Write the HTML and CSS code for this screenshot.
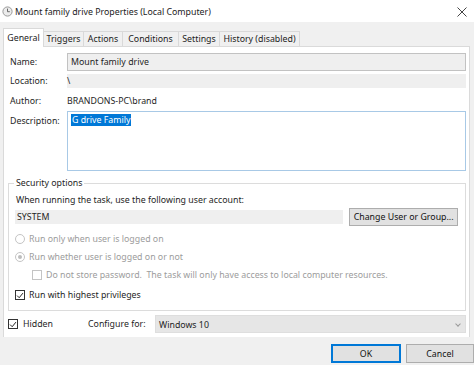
FILE: index.html
```html
<!DOCTYPE html>
<html lang="en">
<head>
    <meta charset="UTF-8">
    <title>Mount family drive Properties (Local Computer)</title>
    <link rel="stylesheet" href="styles.css">
</head>
<body>
  <div class="window">
    <div class="titlebar">
        <svg class="title-icon" width="11" height="11" viewBox="0 0 11 11">
            <circle cx="5.5" cy="5.5" r="4.6" fill="#ececec" stroke="#9a9a9a" stroke-width="1"/>
            <path d="M5.5 2.6 V5.7 H7.8" fill="none" stroke="#6a6a6a" stroke-width="1"/>
        </svg>
        <span class="title-text">Mount family drive Properties (Local Computer)</span>
        <svg class="close-x" width="10" height="10" viewBox="0 0 10 10">
            <path d="M0.5 0.5 L9.5 9.5 M9.5 0.5 L0.5 9.5" stroke="#444" stroke-width="1"/>
        </svg>
    </div>

    <div class="tabs">
        <span class="tab active t-general">General</span>
        <span class="tab t-triggers">Triggers</span>
        <span class="tab t-actions">Actions</span>
        <span class="tab t-conditions">Conditions</span>
        <span class="tab t-settings">Settings</span>
        <span class="tab t-history">History (disabled)</span>
    </div>

    <div class="panel">
        <div class="row name-row">
            <span class="lbl">Name:</span>
            <div class="field boxed">Mount family drive</div>
        </div>
        <div class="row">
            <span class="lbl">Location:</span>
            <div class="field flat">\</div>
        </div>
        <div class="row">
            <span class="lbl">Author:</span>
            <div class="field plain">BRANDONS-PC\brand</div>
        </div>
        <div class="desc-row">
            <span class="lbl">Description:</span>
            <div class="textarea"><span class="sel">G drive Family</span></div>
        </div>

        <div class="group">
            <span class="legend">Security options</span>
            <p class="line">When running the task, use the following user account:</p>
            <div class="account">
                <div class="account-name">SYSTEM</div>
                <button class="btn change">Change User or Group...</button>
            </div>
            <div class="opt first disabled"><span class="radio"></span>Run only when user is logged on</div>
            <div class="opt disabled"><span class="radio on"></span>Run whether user is logged on or not</div>
            <div class="opt sub disabled"><span class="check"></span>Do not store password.&nbsp; The task will only have access to local computer resources.</div>
            <div class="opt priv">
                <span class="check on">
                    <svg width="9" height="9" viewBox="0 0 9 9"><path d="M1.2 4.6 L3.6 7 L7.8 1.8" fill="none" stroke="#222" stroke-width="1.1"/></svg>
                </span>Run with highest privileges
            </div>
        </div>

        <div class="bottom-row">
            <span class="opt hidden-opt">
                <span class="check on">
                    <svg width="9" height="9" viewBox="0 0 9 9"><path d="M1.2 4.6 L3.6 7 L7.8 1.8" fill="none" stroke="#222" stroke-width="1.1"/></svg>
                </span>Hidden
            </span>
            <span class="cfg-lbl">Configure for:</span>
            <div class="select">Windows 10<span class="chev"></span></div>
        </div>
    </div>

    <div class="footer">
        <button class="btn ok">OK</button>
        <button class="btn cancel">Cancel</button>
    </div>
  </div>
</body>
</html>
```

FILE: styles.css
```css
* {
    box-sizing: border-box;
}
body {
    margin: 0;
    padding: 0;
    font-family: "Noto Sans", "Open Sans", sans-serif;
    font-size: 8.8px;
    color: #1e1e1e;
    background: #f0f0f0;
}
.window {
    width: 474px;
    height: 365px;
    overflow: hidden;
    background: #f0f0f0;
    display: flex;
    flex-direction: column;
}

/* title bar */
.titlebar {
    height: 22px;
    flex: none;
    background: #ffffff;
    display: flex;
    align-items: center;
    padding: 1px 0 0 1px;
}
.title-icon {
    margin: 0 2px 0 1px;
}
.title-text {
    flex: 1;
    color: #222;
}
.close-x {
    margin-right: 7px;
}

/* tabs */
.tabs {
    height: 24px;
    flex: none;
    display: flex;
    align-items: flex-end;
    padding-left: 3px;
}
.tab {
    height: 15px;
    line-height: 14px;
    text-align: center;
    border: 1px solid #d9d9d9;
    border-bottom: none;
    margin-right: -1px;
    color: #222;
    background: #f0f0f0;
}
.tab.active {
    background: #ffffff;
    height: 19px;
    line-height: 19px;
    margin-bottom: -1px;
    position: relative;
    z-index: 1;
}
.t-general { width: 41px; }
.t-triggers { width: 41px; }
.t-actions { width: 40px; }
.t-conditions { width: 57px; }
.t-settings { width: 42px; }
.t-history { width: 81px; }

/* main panel */
.panel {
    flex: none;
    height: 291px;
    background: #ffffff;
    margin: 0 4px 0 3px;
    border: 1px solid #dadada;
    border-bottom: none;
    padding: 6px 3px 0 6px;
}
.row {
    display: flex;
    align-items: center;
    height: 20px;
}
.name-row {
    height: 18px;
}
.lbl {
    width: 57px;
    flex: none;
}
.field {
    flex: 1;
    height: 14px;
    line-height: 14px;
}
.boxed {
    height: 18px;
    line-height: 16px;
    background: #efefef;
    border: 1px solid #c2c2c2;
    padding-left: 3px;
}
.flat {
    background: #efefef;
}
.desc-row {
    display: flex;
    height: 60px;
}
.desc-row .lbl {
    padding-top: 4px;
}
.textarea {
    flex: 1;
    border: 1px solid #a8c9e6;
    padding: 3px 3px;
    line-height: 11px;
}
.sel {
    background: #0078d7;
    color: #ffffff;
    padding: 0 1px;
}

/* security group */
.group {
    position: relative;
    height: 128px;
    margin: 12px 0 0 -2px;
    border: 1px solid #dcdcdc;
    padding: 9px 7px 0 7px;
}
.legend {
    position: absolute;
    top: -7px;
    left: 5px;
    line-height: 12px;
    background: #ffffff;
    padding: 0 2px;
}
.line {
    margin: 0;
    height: 14px;
    line-height: 14px;
}
.account {
    display: flex;
    align-items: center;
    height: 20px;
    margin-left: -1px;
}
.account-name {
    width: 329px;
    height: 14px;
    line-height: 14px;
    background: #efefef;
    padding-left: 2px;
}
.btn {
    font-family: inherit;
    font-size: 8.8px;
    color: #111;
    background: #e1e1e1;
    border: 1px solid #adadad;
    padding: 0;
    height: 19px;
}
.change {
    width: 109px;
    height: 18px;
    margin-left: 6px;
}
.opt {
    display: flex;
    align-items: center;
    height: 18px;
}
.opt.first {
    margin-top: 3px;
}
.opt.priv {
    height: 20px;
    margin-top: 1px;
}
.group .opt {
    margin-left: -1px;
}
.opt.disabled {
    color: #9c9c9c;
}
.group .opt.sub {
    margin-left: 16px;
}
.radio {
    width: 10px;
    height: 10px;
    border: 1px solid #c4c4c4;
    border-radius: 50%;
    margin-right: 4px;
    display: flex;
    align-items: center;
    justify-content: center;
}
.radio.on::after {
    content: "";
    width: 4px;
    height: 4px;
    border-radius: 50%;
    background: #bdbdbd;
}
.check {
    width: 10px;
    height: 10px;
    border: 1px solid #c4c4c4;
    margin-right: 4px;
    display: flex;
    align-items: center;
    justify-content: center;
}
.check.on {
    border-color: #333;
}

.bottom-row {
    display: flex;
    align-items: center;
    height: 26px;
}
.hidden-opt {
    width: 80px;
    margin-left: -2px;
}
.hidden-opt .check {
    margin-right: 5px;
}
.cfg-lbl {
    width: 67px;
}
.select {
    flex: 1;
    height: 18px;
    line-height: 18px;
    background: #e6e6e6;
    border: 1px solid #dedede;
    padding-left: 3px;
    position: relative;
}
.chev {
    position: absolute;
    right: 5px;
    top: 6px;
    width: 4px;
    height: 4px;
    border-right: 1px solid #9a9a9a;
    border-bottom: 1px solid #9a9a9a;
    transform: rotate(45deg);
}

/* footer */
.footer {
    flex: 1;
    display: flex;
    justify-content: flex-end;
    align-items: flex-start;
    padding-top: 7px;
}
.ok {
    width: 70px;
    border: 2px solid #0078d7;
}
.cancel {
    width: 68px;
    margin-left: 5px;
}
```
